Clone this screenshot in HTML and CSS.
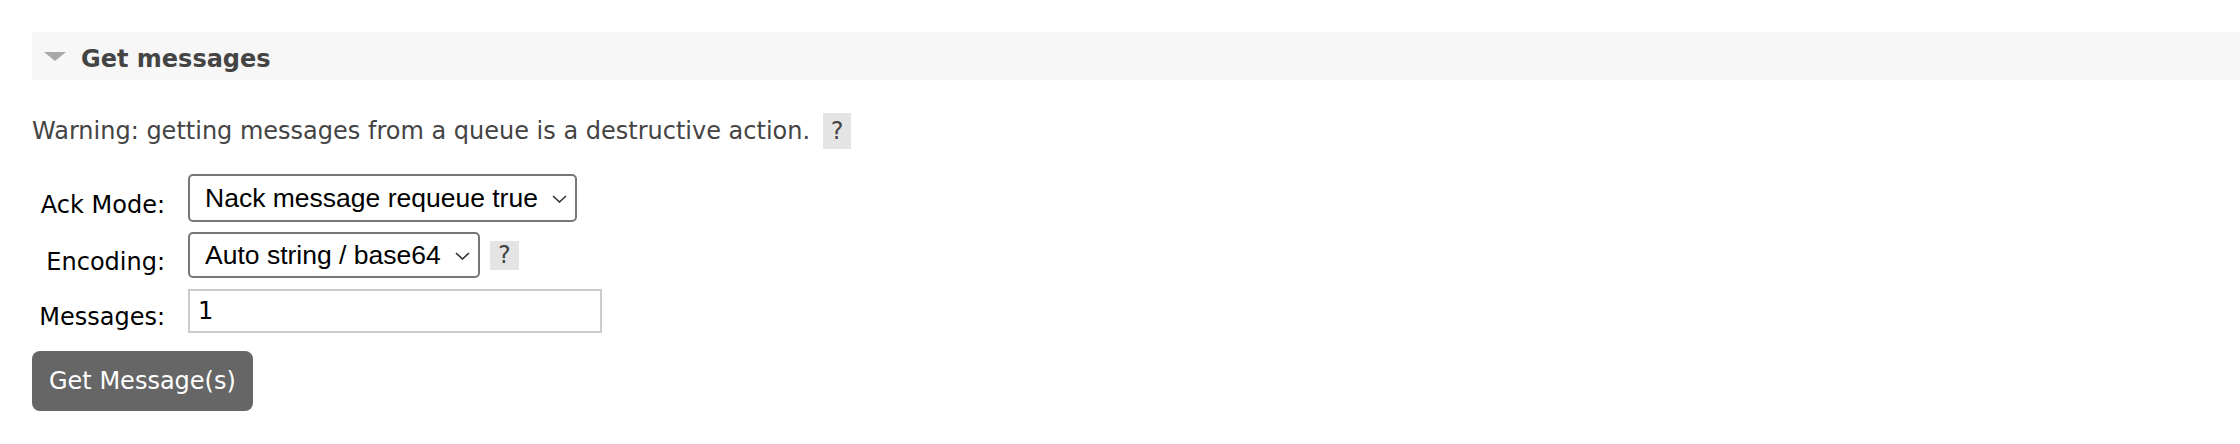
FILE: index.html
```html
<!DOCTYPE html>
<html lang="en">
<head>
<meta charset="utf-8">
<title>Get messages</title>
<link rel="stylesheet" href="styles.css">
</head>
<body>
<div class="section">
  <h2 class="section-title">
    <svg class="toggle" width="22" height="10" viewBox="0 0 22 10" aria-hidden="true"><polygon points="0,0 22,0 11,9" fill="#a8a8a8"/></svg>
    <span>Get messages</span>
  </h2>
  <div class="section-body">
    <p class="warning">Warning: getting messages from a queue is a destructive action. <span class="help help-lg">?</span></p>
    <form class="get-form">
      <div class="form-grid">
        <label class="field-label" for="ackmode">Ack Mode:</label>
        <div class="field">
          <div class="select-wrap">
            <select id="ackmode" class="select select-ack">
              <option>Nack message requeue true</option>
              <option>Automatic ack</option>
              <option>Reject requeue true</option>
              <option>Reject requeue false</option>
            </select>
            <svg class="chev" width="15" height="8" viewBox="0 0 15 8" aria-hidden="true"><path d="M1 1 L7.5 7 L14 1" fill="none" stroke="#333" stroke-width="1.6"/></svg>
          </div>
        </div>

        <label class="field-label" for="encoding">Encoding:</label>
        <div class="field">
          <div class="select-wrap">
            <select id="encoding" class="select select-enc">
              <option>Auto string / base64</option>
              <option>base64</option>
            </select>
            <svg class="chev" width="15" height="8" viewBox="0 0 15 8" aria-hidden="true"><path d="M1 1 L7.5 7 L14 1" fill="none" stroke="#333" stroke-width="1.6"/></svg>
          </div>
          <span class="help">?</span>
        </div>

        <label class="field-label" for="count">Messages:</label>
        <div class="field">
          <input id="count" class="text-input" type="text" value="1">
        </div>
      </div>
      <button type="button" class="btn">Get Message(s)</button>
    </form>
  </div>
</div>
</body>
</html>
```

FILE: styles.css
```css
html, body {
  margin: 0;
  padding: 0;
  background: #ffffff;
}

body {
  font-family: "DejaVu Sans", Verdana, sans-serif;
  font-size: 24px;
  color: #444444;
}

.section {
  margin: 32px 0 0 32px;
}

.section-title {
  display: flex;
  align-items: center;
  height: 48px;
  margin: 0;
  background: #f7f7f7;
  font-size: 24px;
  font-weight: bold;
  color: #444444;
}

.toggle {
  margin: 2px 15px 0 12px;
  flex: none;
}

.section-title span {
  padding-top: 6px;
  line-height: 28px;
}

.warning {
  margin: 33px 0 0 0;
  line-height: 28px;
  color: #444444;
}

.help {
  display: inline-block;
  padding: 1px 8px;
  line-height: 27px;
  background: #e4e4e4;
  color: #444444;
}

.help-lg {
  padding: 4px 8px;
  line-height: 28px;
  margin-left: 5px;
}

.get-form {
  display: flex;
  flex-direction: column;
  align-items: flex-start;
  margin-top: 25px;
}

.form-grid {
  display: grid;
  grid-template-columns: 133px auto;
  column-gap: 23px;
  row-gap: 10px;
  align-items: center;
}

.field-label {
  text-align: right;
  color: #000000;
  line-height: 28px;
  padding-top: 13px;
  white-space: nowrap;
}

.field {
  display: flex;
  align-items: center;
  gap: 10px;
}

.select-wrap {
  position: relative;
  display: inline-block;
}

.select {
  -webkit-appearance: none;
  appearance: none;
  box-sizing: border-box;
  margin: 0;
  padding: 0 26px 0 15px;
  border: 2px solid #777777;
  border-radius: 5px;
  background: #ffffff;
  font-family: "Liberation Sans", Arial, sans-serif;
  font-size: 26.5px;
  color: #000000;
}

.select-ack {
  width: 389px;
  height: 48px;
}

.select-enc {
  width: 292px;
  height: 46px;
}

.chev {
  position: absolute;
  right: 10px;
  top: 50%;
  margin-top: -3px;
  pointer-events: none;
}

.text-input {
  box-sizing: border-box;
  width: 414px;
  height: 44px;
  margin: 1px 0 0 0;
  padding: 0 8px;
  border: 2px solid #cccccc;
  border-radius: 0;
  font-family: "DejaVu Sans", Verdana, sans-serif;
  font-size: 24px;
  color: #000000;
  background: #ffffff;
  outline: none;
}

.btn {
  margin-top: 18px;
  height: 60px;
  padding: 0 17px;
  border: none;
  border-radius: 8px;
  background: #666666;
  color: #ffffff;
  font-family: "DejaVu Sans", Verdana, sans-serif;
  font-size: 24px;
  line-height: 60px;
  cursor: pointer;
}
```
